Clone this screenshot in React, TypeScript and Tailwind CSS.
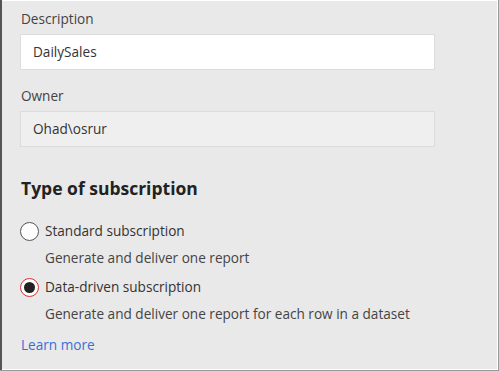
import React, { useState } from 'react';

function Radio({ checked }: { checked: boolean }) {
  return (
    <span
      className={`flex h-[19px] w-[19px] shrink-0 items-center justify-center rounded-full border-[1.5px] bg-white ${
        checked ? 'border-[#d13438]' : 'border-[#555]'
      }`}
    >
      {checked && <span className="h-[11px] w-[11px] rounded-full bg-[#222]" />}
    </span>
  );
}

export default function App() {
  const [kind, setKind] = useState<'standard' | 'data'>('data');

  const options = [
    { id: 'standard' as const, title: 'Standard subscription', desc: 'Generate and deliver one report' },
    { id: 'data' as const, title: 'Data-driven subscription', desc: 'Generate and deliver one report for each row in a dataset' },
  ];

  return (
    <div className="h-[371px] w-[499px] bg-[#9a9a9a] font-['Open_Sans',sans-serif] text-[13.6px] text-[#333]">
      <div className="flex h-[370px] w-[498px] border-l-2 border-l-[#555] bg-white pt-px pr-px">
        <div className="flex h-[368px] w-full flex-col bg-[#e9e9e9] pl-[18px]">
          <div className="mt-[8px] pl-px leading-[20px] text-[#444]">Description</div>
          <div className="mt-[5px] flex h-[36px] w-[415px] items-center border border-[#dcdcdc] bg-white px-[12px] text-[#333]">
            DailySales
          </div>
          <div className="mt-[16px] pl-px leading-[20px] text-[#444]">Owner</div>
          <div className="mt-[5px] flex h-[36px] w-[415px] items-center border border-[#dcdcdc] bg-[#efefef] px-[12px] text-[#333]">
            Ohad\osrur
          </div>

          <div className="mt-[29px] pl-px text-[17.5px] font-bold leading-[24px] text-[#222]">Type of subscription</div>

          <div className="mt-[21px] flex flex-col gap-[9px]">
            {options.map((o) => (
              <label key={o.id} className="flex cursor-pointer flex-col" onClick={() => setKind(o.id)}>
                <span className="flex items-center gap-[6px]">
                  <Radio checked={kind === o.id} />
                  <span className="leading-[20px] text-[#333]">{o.title}</span>
                </span>
                <span className="mt-[7px] pl-[25px] leading-[20px] text-[#444]">{o.desc}</span>
              </label>
            ))}
          </div>

          <a href="#" className="mt-[11px] pl-px leading-[20px] text-[#3a6fd8]">
            Learn more
          </a>
        </div>
      </div>
    </div>
  );
}
